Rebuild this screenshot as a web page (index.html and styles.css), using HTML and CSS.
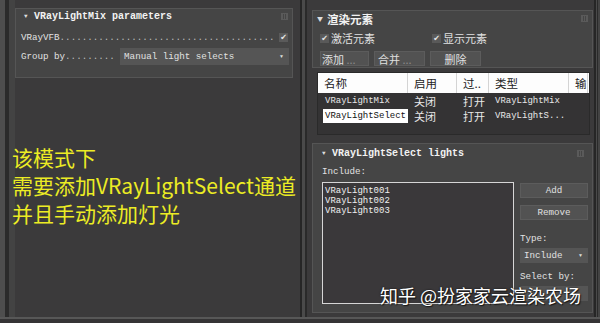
FILE: index.html
```html
<!DOCTYPE html>
<html lang="zh">
<head>
    <meta charset="UTF-8">
    <title>VRayLightMix</title>
    <link rel="stylesheet" href="styles.css">
</head>
<body>
    <div class="page">
        <div class="edge-l"></div>
        <div class="col-left">
            <div class="panel mix">
                <div class="title"><span class="tri">▼</span>VRayLightMix parameters<span class="grip"></span></div>
                <div class="row r1">
                    <span class="lab">VRayVFB</span>
                    <span class="dots">..........................................................................</span>
                    <span class="chk">✔</span>
                </div>
                <div class="row r2">
                    <span class="lab">Group by</span>
                    <span class="dots">..........</span>
                    <div class="drop wide"><span>Manual light selects</span><span class="arr">▼</span></div>
                </div>
            </div>
            <div class="note">该模式下<br>需要添加VRayLightSelect通道<br>并且手动添加灯光</div>
        </div>
        <div class="split"></div>
        <div class="col-right">
            <div class="panel elem">
                <div class="title cn"><span class="tri">▼</span>渲染元素<span class="grip"></span></div>
                <div class="checks">
                    <label class="ck first"><span class="box">✔</span>激活元素</label>
                    <label class="ck"><span class="box">✔</span>显示元素</label>
                </div>
                <div class="btns">
                    <button class="btn b-add">添加 <i>...</i></button>
                    <button class="btn b-merge">合并 <i>...</i></button>
                    <button class="btn b-del">删除</button>
                </div>
            </div>
            <div class="list">
                <div class="thead">
                    <span class="c1">名称</span><span class="c2">启用</span><span class="c3">过..</span><span class="c4">类型</span><span class="c5">输</span>
                </div>
                <div class="trow">
                    <span class="c1 mono"><b>VRayLightMix</b></span><span class="c2">关闭</span><span class="c3">打开</span><span class="c4 mono">VRayLightMix</span>
                </div>
                <div class="trow">
                    <span class="c1 mono"><b class="sel">VRayLightSelect</b></span><span class="c2">关闭</span><span class="c3">打开</span><span class="c4 mono">VRayLightS...</span>
                </div>
            </div>
            <div class="panel lights">
                <div class="title"><span class="tri">▼</span>VRayLightSelect lights<span class="grip"></span></div>
                <div class="inc">Include:</div>
                <div class="lbody">
                    <div class="lbox">
                        <div>VRayLight001</div>
                        <div>VRayLight002</div>
                        <div>VRayLight003</div>
                    </div>
                    <div class="side">
                        <button class="btn sbtn">Add</button>
                        <button class="btn sbtn gap">Remove</button>
                        <div class="slab">Type:</div>
                        <div class="drop"><span>Include</span><span class="arr">▼</span></div>
                        <div class="slab s2">Select by:</div>
                        <div class="drop"><span></span></div>
                    </div>
                </div>
            </div>
        </div>
        <div class="edge-r"></div>
        <div class="mark">知乎 @扮家家云渲染农场</div>
    </div>
</body>
</html>
```

FILE: styles.css
```css
body,div,span,button,label{
    padding: 0;
    margin: 0;
    box-sizing: border-box;
}
body{
    width: 600px;
    height: 323px;
    overflow: hidden;
    background-color: #353435;
    font-family: 'Liberation Mono', monospace;
    color: #e2e2e2;
}
.page{
    position: relative;
    display: flex;
    height: 319px;
    background-color: #3b3a3b;
    border-bottom: 2px solid #575757;
}
.edge-l{
    width: 15px;
    background: linear-gradient(to right, #4e4e4e 0 5px, #2b2b2b 5px 9px, #434343 9px);
}
.split{
    width: 19px;
    background: linear-gradient(to right, #3b3a3b 0 7px, #262626 7px 9px, #4a4a4a 9px 12px, #2a2a2a 12px 14px, #3b3a3b 14px);
}
.edge-r{
    width: 7px;
    background: linear-gradient(to right, #3b3a3b 0 1px, #262626 1px 3px, #4a4a4a 3px 4px, #2a2a2a 4px 5px, #444 5px);
}
.col-left{
    width: 278px;
    padding-top: 8px;
}
.col-right{
    width: 281px;
    padding-top: 10px;
}
.panel{
    background-color: #454545;
    border: 1px solid #555;
}
.title{
    display: flex;
    align-items: center;
    height: 15px;
    padding-left: 7px;
    font-size: 10px;
    font-weight: bold;
    color: #f2f2f2;
}
.title.cn{
    font-family: 'Noto Sans CJK SC', sans-serif;
    font-size: 11.5px;
}
.tri{
    width: 10px;
    font-size: 6px;
    color: #ddd;
}
.grip{
    width: 7px;
    height: 7px;
    margin-left: auto;
    margin-right: 4px;
    border: 1px solid #5a5a5a;
    background: repeating-linear-gradient(to right, #5a5a5a 0 1px, transparent 1px 2px);
}
/* left panel */
.mix{
    height: 70px;
}
.mix .title{
    padding-left: 8px;
}
.row{
    display: flex;
    align-items: center;
    padding: 0 3px 0 5px;
    font-size: 9.2px;
}
.r1{
    height: 16px;
    margin-top: 5px;
}
.r2{
    height: 17px;
    margin-top: 3px;
}
.lab{
    white-space: nowrap;
}
.dots{
    flex: 1;
    min-width: 0;
    overflow: hidden;
    white-space: nowrap;
    color: #bbb;
}
.r2 .dots{
    flex: none;
    width: 50px;
    margin-right: 5px;
}
.chk{
    flex: none;
    width: 9px;
    height: 9px;
    margin-left: 3px;
    margin-right: 1px;
    background-color: #5a5a5a;
    font-family: 'DejaVu Sans', sans-serif;
    font-size: 8px;
    line-height: 9px;
    text-align: center;
    color: #e8e8e8;
}
.drop{
    display: flex;
    align-items: center;
    justify-content: space-between;
    height: 15px;
    padding: 0 6px 0 4px;
    background-color: #555;
    font-size: 9.2px;
    color: #e2e2e2;
}
.drop.wide{
    flex: 1;
    height: 17px;
}
.arr{
    font-size: 5px;
    color: #ddd;
}
.note{
    position: relative;
    z-index: 1;
    margin: 65px 0 0 -3px;
    font-family: 'Noto Sans CJK SC', sans-serif;
    font-size: 21px;
    line-height: 28px;
    color: #ecec24;
    white-space: nowrap;
}
/* render elements */
.elem{
    height: 58px;
}
.elem .title{
    padding-left: 4px;
}
.checks{
    display: flex;
    height: 14px;
    margin-top: 5px;
    padding-left: 7px;
    font-family: 'Noto Sans CJK SC', sans-serif;
    font-size: 11px;
}
.ck{
    display: flex;
    align-items: center;
}
.ck.first{
    width: 112px;
}
.box{
    width: 9px;
    height: 9px;
    margin-right: 2px;
    background-color: #595959;
    font-family: 'DejaVu Sans', sans-serif;
    font-size: 8px;
    line-height: 9px;
    text-align: center;
    color: #e6e6e6;
}
.btns{
    display: flex;
    gap: 5px;
    height: 15px;
    margin-top: 6px;
    padding-left: 7px;
}
.btn{
    height: 15px;
    border: 1px solid #5c5c5c;
    background-color: #525252;
    font-family: 'Noto Sans CJK SC', sans-serif;
    font-size: 11px;
    line-height: 12px;
    color: #e0e0e0;
}
.btn i{
    font-style: normal;
    color: #8a8a8a;
}
.b-add{
    width: 49px;
    padding-left: 1px;
    text-align: left;
}
.b-merge{
    width: 51px;
    padding-left: 3px;
    text-align: left;
}
.b-del{
    width: 51px;
}
/* list */
.list{
    height: 63px;
    margin: 4px 3px 0 5px;
    background-color: #343334;
    border: 1px solid #2a2a2a;
}
.thead{
    display: flex;
    height: 20px;
    background-color: #fdfdfd;
    font-family: 'Noto Sans CJK SC', sans-serif;
    font-size: 11.5px;
    line-height: 20px;
    color: #222;
}
.thead span{
    padding-left: 6px;
    border-right: 1px solid #d4d4d4;
    overflow: hidden;
    white-space: nowrap;
}
.c1{ width: 90px; }
.c2{ width: 49px; }
.c3{ width: 32px; }
.c4{ width: 80px; }
.c5{ width: 19px; }
.trow{
    display: flex;
    align-items: center;
    height: 14px;
    margin-top: 1px;
    font-family: 'Noto Sans CJK SC', sans-serif;
    font-size: 11px;
    line-height: 14px;
    color: #e8e8e8;
}
.trow span{
    padding-left: 6px;
    white-space: nowrap;
}
.trow .mono{
    font-family: 'Liberation Mono', monospace;
    font-size: 9px;
}
.trow .c1{
    padding-left: 5px;
}
.trow b{
    display: block;
    padding-left: 2px;
    font-weight: normal;
}
.trow b.sel{
    background-color: #fff;
    color: #111;
}
/* lights */
.lights{
    height: 170px;
    margin-top: 8px;
    padding: 0 4px 0 9px;
}
.lights .title{
    height: 18px;
    padding-left: 0;
}
.inc{
    height: 12px;
    margin-top: 4px;
    font-size: 9.2px;
    line-height: 12px;
}
.lbody{
    display: flex;
    gap: 6px;
    margin-top: 4px;
}
.lbox{
    width: 192px;
    height: 122px;
    padding: 3px 0 0 2px;
    background-color: #3a383a;
    border: 1px solid #d6d6d6;
    font-size: 9px;
    line-height: 10px;
    color: #f0f0f0;
}
.side{
    display: flex;
    flex-direction: column;
    width: 68px;
}
.sbtn{
    margin-top: 1px;
    font-family: 'Liberation Mono', monospace;
    font-size: 9.2px;
}
.sbtn.gap{
    margin-top: 7px;
}
.slab{
    height: 12px;
    margin-top: 13px;
    margin-bottom: 3px;
    font-size: 9.2px;
    line-height: 12px;
}
.slab.s2{
    margin-top: 8px;
}
.mark{
    position: absolute;
    left: 380px;
    top: 282px;
    font-family: 'Noto Sans CJK SC', sans-serif;
    font-size: 18px;
    line-height: 26px;
    color: #fff;
    text-shadow: 0 0 2px rgba(0,0,0,.8), 1px 1px 1px rgba(0,0,0,.6);
    white-space: nowrap;
}
```
